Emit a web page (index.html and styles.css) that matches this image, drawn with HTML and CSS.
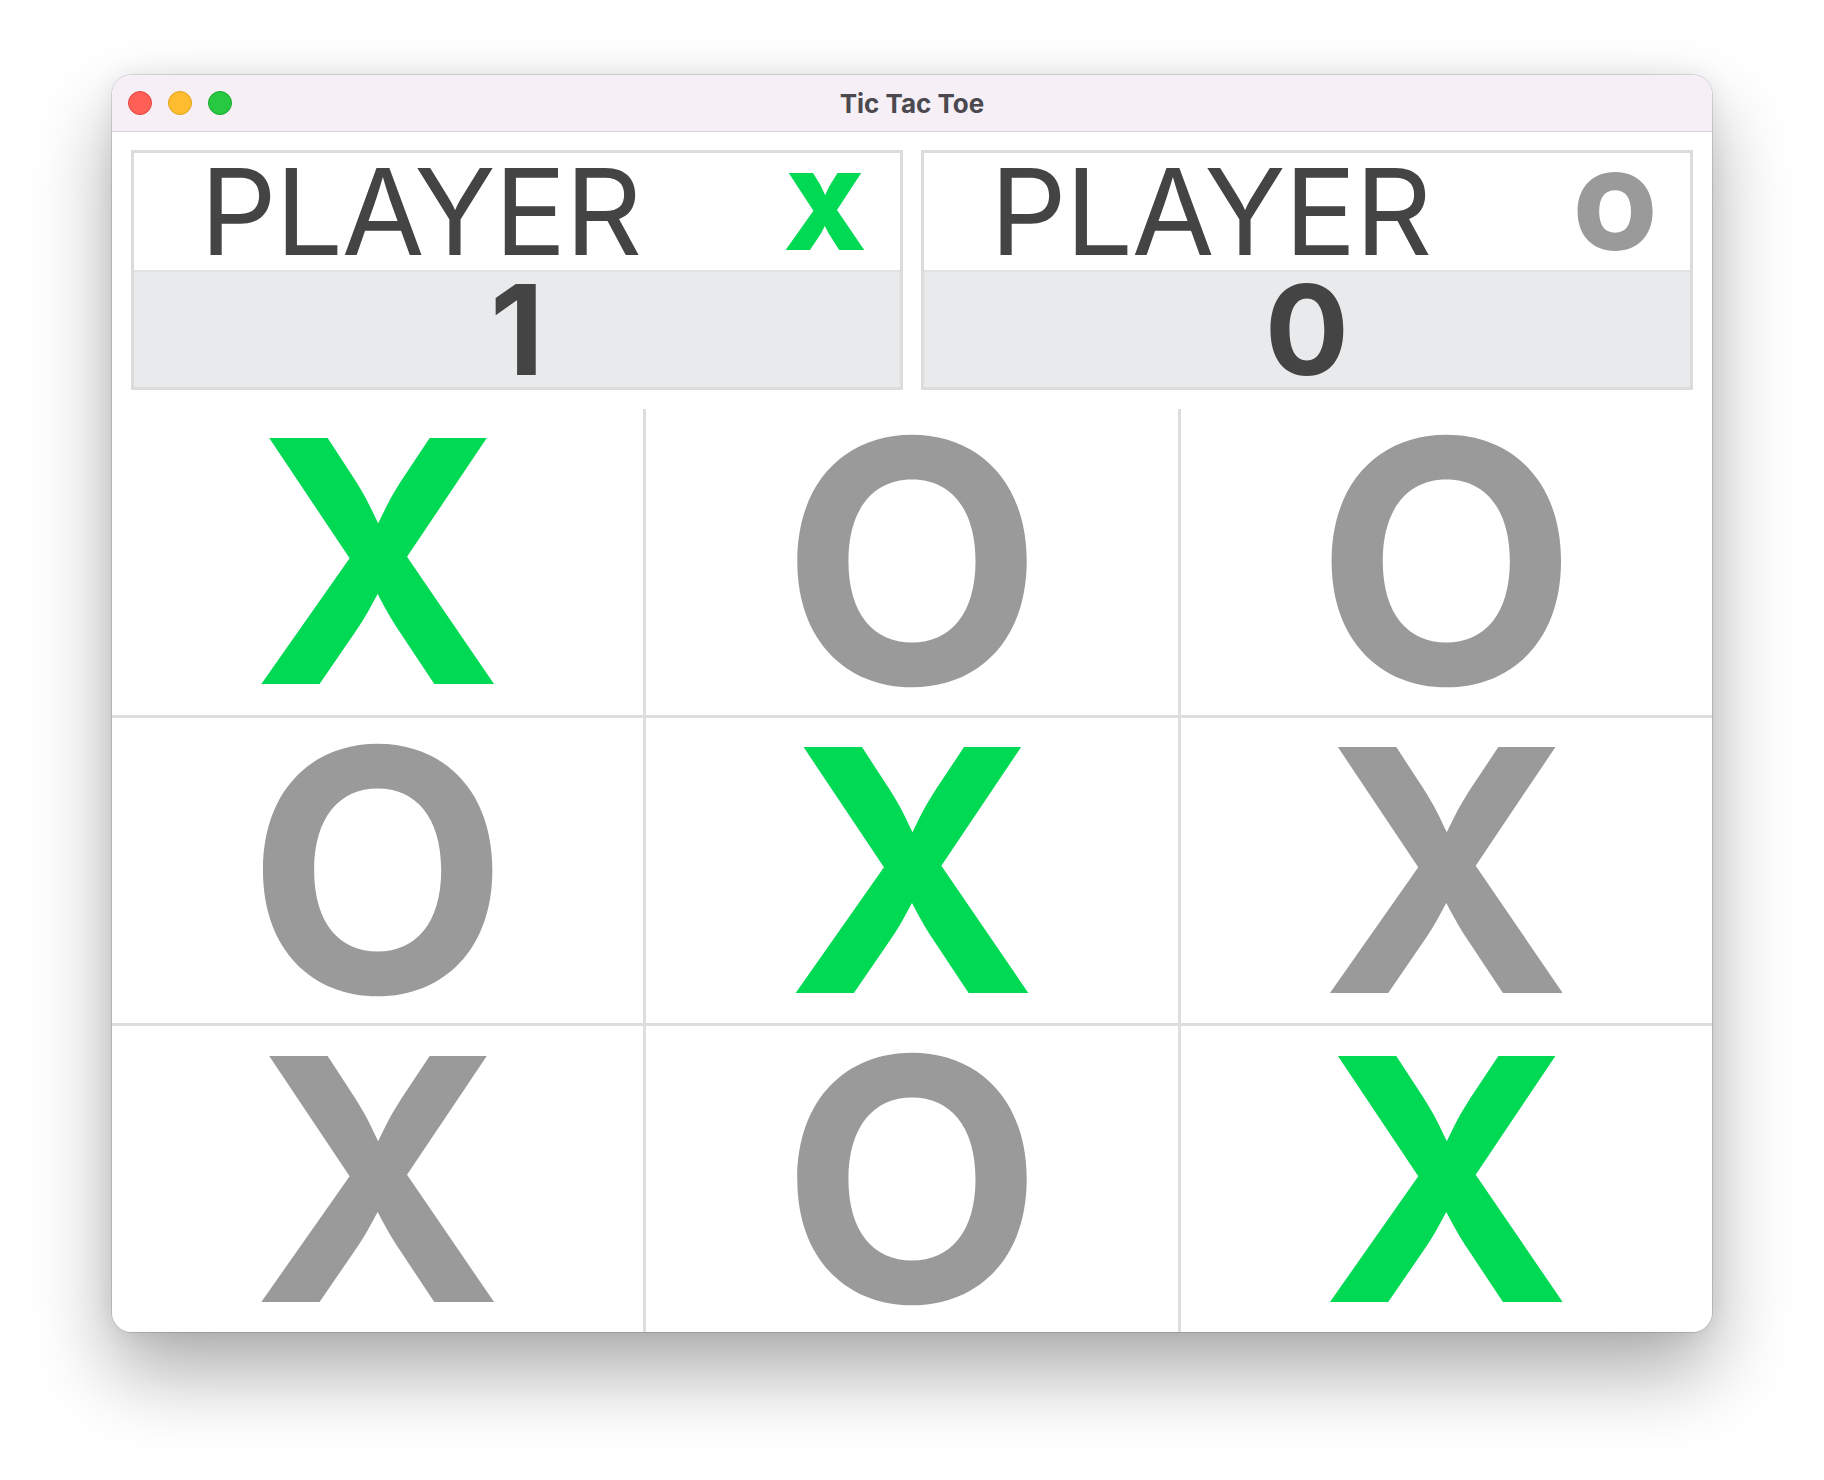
FILE: index.html
```html
<!DOCTYPE html>
<html lang="en">
<head>
    <meta charset="UTF-8">
    <meta name="viewport" content="width=device-width, initial-scale=1.0">
    <title>Tic Tac Toe</title>
    <link rel="stylesheet" href="styles.css">
</head>
<body>
    <div class="window">
        <div class="titlebar">
            <div class="lights">
                <span class="light red"></span>
                <span class="light yellow"></span>
                <span class="light green"></span>
            </div>
            <div class="title">Tic Tac Toe</div>
            <div></div>
        </div>

        <div class="content">
            <div class="scoreboard">
                <div class="score-card">
                    <div class="score-head">
                        <span class="player-label">PLAYER</span>
                        <span class="player-mark mark-x">X</span>
                    </div>
                    <div class="score-value">1</div>
                </div>
                <div class="score-card">
                    <div class="score-head">
                        <span class="player-label">PLAYER</span>
                        <span class="player-mark mark-o">O</span>
                    </div>
                    <div class="score-value">0</div>
                </div>
            </div>

            <div class="board">
                <div class="cell win">X</div>
                <div class="cell">O</div>
                <div class="cell">O</div>
                <div class="cell">O</div>
                <div class="cell win">X</div>
                <div class="cell">X</div>
                <div class="cell">X</div>
                <div class="cell">O</div>
                <div class="cell win">X</div>
            </div>
        </div>
    </div>
</body>
</html>
```

FILE: styles.css
```css
body {
    font-family: Inter, "Noto Sans", sans-serif;
    background-color: #ffffff;
    margin: 0;
    padding: 75px 0 148px 112px;
}
.window {
    width: 1600px;
    height: 1257px;
    display: flex;
    flex-direction: column;
    background-color: #ffffff;
    border-radius: 20px;
    overflow: hidden;
    box-shadow: 0 0 0 1px rgba(0, 0, 0, 0.12), 0 40px 80px rgba(0, 0, 0, 0.33), 0 0 24px rgba(0, 0, 0, 0.08);
}
.titlebar {
    flex: 0 0 57px;
    box-sizing: border-box;
    display: grid;
    grid-template-columns: 1fr auto 1fr;
    align-items: center;
    background-color: #f6eff6;
    border-bottom: 1px solid #d9d4d9;
}
.lights {
    display: flex;
    gap: 16px;
    padding-left: 16px;
}
.light {
    width: 24px;
    height: 24px;
    border-radius: 50%;
    box-sizing: border-box;
}
.red {
    background-color: #ff5f57;
    border: 1px solid #e2463f;
}
.yellow {
    background-color: #febc2e;
    border: 1px solid #e1a116;
}
.green {
    background-color: #28c840;
    border: 1px solid #17a92c;
}
.title {
    font-size: 26px;
    font-weight: 700;
    color: #4b494e;
}
.content {
    flex: 1;
    min-height: 0;
    display: flex;
    flex-direction: column;
}
.scoreboard {
    flex-shrink: 0;
    display: grid;
    grid-template-columns: 1fr 1fr;
    gap: 18px;
    padding: 18px 19px 19px;
}
.score-card {
    border: 3px solid #dcdcdc;
    color: #444444;
}
.score-head {
    height: 117px;
    display: flex;
    align-items: center;
    border-bottom: 2px solid #e2e2e2;
}
.player-label {
    font-size: 120px;
    font-weight: 400;
    line-height: 1;
    letter-spacing: -1.4px;
    margin-left: 66px;
}
.player-mark {
    margin-left: auto;
    width: 150px;
    text-align: center;
    font-size: 106px;
    font-weight: 900;
    line-height: 1;
}
.mark-x {
    color: #00d954;
}
.mark-o {
    color: #9a9a9a;
}
.score-value {
    height: 115px;
    display: flex;
    align-items: center;
    justify-content: center;
    background-color: #e9eaec;
    font-size: 125px;
    font-weight: 700;
    line-height: 1;
}
.board {
    flex: 1;
    min-height: 0;
    display: grid;
    grid-template-columns: repeat(3, minmax(0, 1fr));
    grid-template-rows: repeat(3, minmax(0, 1fr));
    gap: 3px;
    background-color: #dedede;
}
.cell {
    min-height: 0;
    display: flex;
    align-items: center;
    justify-content: center;
    background-color: #ffffff;
    font-size: 338px;
    font-weight: 700;
    line-height: 0.85;
    color: #9a9a9a;
}
.cell.win {
    color: #00d954;
}
```
